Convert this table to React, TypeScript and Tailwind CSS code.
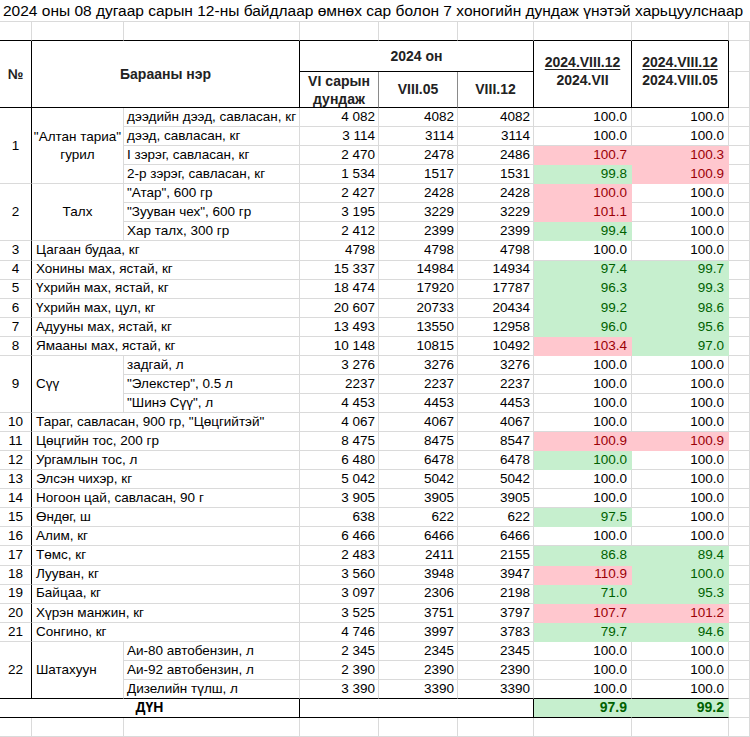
import React from "react";

type Tone = "r" | "g" | "";

type Item = {
  name: string;
  vi: string;
  a: string;
  b: string;
  c1: string;
  c2: string;
  t1?: Tone;
  t2?: Tone;
};

type Group = { no: number; group?: string; center?: boolean; items: Item[] };

const groups: Group[] = [
  {
    no: 1,
    group: "\"Алтан тариа\" гурил",
    center: true,
    items: [
      { name: "дээдийн дээд, савласан, кг", vi: "4 082", a: "4082", b: "4082", c1: "100.0", c2: "100.0" },
      { name: "дээд, савласан, кг", vi: "3 114", a: "3114", b: "3114", c1: "100.0", c2: "100.0" },
      { name: "I зэрэг, савласан, кг", vi: "2 470", a: "2478", b: "2486", c1: "100.7", c2: "100.3", t1: "r", t2: "r" },
      { name: "2-р зэрэг, савласан, кг", vi: "1 534", a: "1517", b: "1531", c1: "99.8", c2: "100.9", t1: "g", t2: "r" },
    ],
  },
  {
    no: 2,
    group: "Талх",
    center: true,
    items: [
      { name: "\"Атар\", 600 гр", vi: "2 427", a: "2428", b: "2428", c1: "100.0", c2: "100.0", t1: "r" },
      { name: "\"Зууван чех\", 600 гр", vi: "3 195", a: "3229", b: "3229", c1: "101.1", c2: "100.0", t1: "r" },
      { name: "Хар талх, 300 гр", vi: "2 412", a: "2399", b: "2399", c1: "99.4", c2: "100.0", t1: "g" },
    ],
  },
  { no: 3, items: [{ name: "Цагаан будаа, кг", vi: "4798", a: "4798", b: "4798", c1: "100.0", c2: "100.0" }] },
  { no: 4, items: [{ name: "Хонины мах, ястай, кг", vi: "15 337", a: "14984", b: "14934", c1: "97.4", c2: "99.7", t1: "g", t2: "g" }] },
  { no: 5, items: [{ name: "Үхрийн мах, ястай, кг", vi: "18 474", a: "17920", b: "17787", c1: "96.3", c2: "99.3", t1: "g", t2: "g" }] },
  { no: 6, items: [{ name: "Үхрийн мах, цул, кг", vi: "20 607", a: "20733", b: "20434", c1: "99.2", c2: "98.6", t1: "g", t2: "g" }] },
  { no: 7, items: [{ name: "Адууны мах, ястай, кг", vi: "13 493", a: "13550", b: "12958", c1: "96.0", c2: "95.6", t1: "g", t2: "g" }] },
  { no: 8, items: [{ name: "Ямааны мах, ястай, кг", vi: "10 148", a: "10815", b: "10492", c1: "103.4", c2: "97.0", t1: "r", t2: "g" }] },
  {
    no: 9,
    group: "Сүү",
    items: [
      { name: "задгай, л", vi: "3 276", a: "3276", b: "3276", c1: "100.0", c2: "100.0" },
      { name: "\"Элекстер\", 0.5 л", vi: "2237", a: "2237", b: "2237", c1: "100.0", c2: "100.0" },
      { name: "\"Шинэ Сүү\", л", vi: "4 453", a: "4453", b: "4453", c1: "100.0", c2: "100.0" },
    ],
  },
  { no: 10, items: [{ name: "Тараг, савласан, 900 гр, \"Цөцгийтэй\"", vi: "4 067", a: "4067", b: "4067", c1: "100.0", c2: "100.0" }] },
  { no: 11, items: [{ name: "Цөцгийн тос, 200 гр", vi: "8 475", a: "8475", b: "8547", c1: "100.9", c2: "100.9", t1: "r", t2: "r" }] },
  { no: 12, items: [{ name: "Ургамлын тос, л", vi: "6 480", a: "6478", b: "6478", c1: "100.0", c2: "100.0", t1: "g" }] },
  { no: 13, items: [{ name: "Элсэн чихэр, кг", vi: "5 042", a: "5042", b: "5042", c1: "100.0", c2: "100.0" }] },
  { no: 14, items: [{ name: "Ногоон цай, савласан, 90 г", vi: "3 905", a: "3905", b: "3905", c1: "100.0", c2: "100.0" }] },
  { no: 15, items: [{ name: "Өндөг, ш", vi: "638", a: "622", b: "622", c1: "97.5", c2: "100.0", t1: "g" }] },
  { no: 16, items: [{ name: "Алим, кг", vi: "6 466", a: "6466", b: "6466", c1: "100.0", c2: "100.0" }] },
  { no: 17, items: [{ name: "Төмс, кг", vi: "2 483", a: "2411", b: "2155", c1: "86.8", c2: "89.4", t1: "g", t2: "g" }] },
  { no: 18, items: [{ name: "Лууван, кг", vi: "3 560", a: "3948", b: "3947", c1: "110.9", c2: "100.0", t1: "r", t2: "g" }] },
  { no: 19, items: [{ name: "Байцаа, кг", vi: "3 097", a: "2306", b: "2198", c1: "71.0", c2: "95.3", t1: "g", t2: "g" }] },
  { no: 20, items: [{ name: "Хүрэн манжин, кг", vi: "3 525", a: "3751", b: "3797", c1: "107.7", c2: "101.2", t1: "r", t2: "r" }] },
  { no: 21, items: [{ name: "Сонгино, кг", vi: "4 746", a: "3997", b: "3783", c1: "79.7", c2: "94.6", t1: "g", t2: "g" }] },
  {
    no: 22,
    group: "Шатахуун",
    items: [
      { name: "Аи-80 автобензин, л", vi: "2 345", a: "2345", b: "2345", c1: "100.0", c2: "100.0" },
      { name: "Аи-92 автобензин, л", vi: "2 390", a: "2390", b: "2390", c1: "100.0", c2: "100.0" },
      { name: "Дизелийн түлш, л", vi: "3 390", a: "3390", b: "3390", c1: "100.0", c2: "100.0" },
    ],
  },
];

// gridline / border colours
const R = "border-r-[#dadada]";
const B = "border-b-[#dadada]";
const RK = "border-r-black";
const BK = "border-b-black";
const RM = "border-r-[#8a8a8a]";

function Cell({ className = "", children }: { className?: string; children?: React.ReactNode }) {
  return (
    <div className={`flex items-center overflow-hidden whitespace-nowrap border-r border-b ${className}`}>
      {children}
    </div>
  );
}

function toneCls(t: Tone | undefined, bottom: string): string {
  if (t === "r") return "bg-[#ffc7ce] text-[#9c0006] border-r-[#ffc7ce] border-b-[#ffc7ce]";
  if (t === "g") return "bg-[#c6efce] text-[#006100] border-r-[#c6efce] border-b-[#c6efce]";
  return `${R} ${bottom}`;
}

export default function App() {
  return (
    <div className="relative w-[750px] h-[737px] overflow-hidden bg-white text-[13.5px] text-black font-['Liberation_Sans',Arial,sans-serif]">
      <div className="grid grid-cols-[32px_92px_176px_79px_79px_76px_98px_97px_21px] grid-rows-[22px_19px_31px_36px_repeat(31,19.065px)_19px_19px]">
        {/* title */}
        <div className="col-span-9 flex items-center border-b border-b-[#dadada] pl-[3px] text-[15.5px] whitespace-nowrap">
          2024 оны 08 дугаар сарын 12-ны байдлаар өмнөх сар болон 7 хоногийн дундаж үнэтэй харьцуулснаар
        </div>

        {/* empty row above header */}
        {[0, 1, 2, 3, 4, 5, 6, 7].map((i) => (
          <Cell key={`e${i}`} className={`${R} ${BK}`} />
        ))}
        <Cell className={`${R} ${B}`} />

        {/* header */}
        <Cell className={`row-span-2 justify-center text-[14px] font-bold text-[#222] ${RK} ${BK}`}>№</Cell>
        <Cell className={`col-span-2 row-span-2 justify-center text-[14px] font-bold text-[#222] ${RK} ${BK}`}>Барааны нэр</Cell>
        <Cell className={`col-span-3 justify-center text-[14px] font-bold text-[#222] ${RK} ${BK}`}>2024 он</Cell>
        <div className={`row-span-2 flex flex-col items-center justify-center border-r border-b pb-[6px] text-[14px] font-bold leading-[18px] text-[#222] ${RK} ${BK}`}>
          <span className="underline underline-offset-2">2024.VIII.12</span>
          <span>2024.VII</span>
        </div>
        <div className={`row-span-2 flex flex-col items-center justify-center border-r border-b pb-[6px] text-[14px] font-bold leading-[18px] text-[#222] ${RK} ${BK}`}>
          <span className="underline underline-offset-2">2024.VIII.12</span>
          <span>2024.VIII.05</span>
        </div>
        <Cell className={`${R} ${B}`} />
        <div className={`flex flex-col items-center justify-center border-r border-b text-center text-[14px] font-bold leading-[18px] text-[#222] ${RM} ${BK}`}>
          <span>VI сарын</span>
          <span>дундаж</span>
        </div>
        <Cell className={`justify-center text-[14px] font-bold text-[#222] ${RM} ${BK}`}>VIII.05</Cell>
        <Cell className={`justify-center text-[14px] font-bold text-[#222] ${RK} ${BK}`}>VIII.12</Cell>
        <Cell className={`${R} ${B}`} />

        {/* body */}
        {groups.map((g, gi) => {
          const lastGroup = gi === groups.length - 1;
          const span = g.items.length === 4 ? "row-span-4" : g.items.length === 3 ? "row-span-3" : "";
          return g.items.map((it, ii) => {
            const bot = lastGroup && ii === g.items.length - 1 ? BK : B;
            const gb = lastGroup ? BK : B;
            return (
              <React.Fragment key={`${g.no}-${ii}`}>
                {ii === 0 && <Cell className={`${span} justify-center ${RK} ${gb}`}>{g.no}</Cell>}
                {ii === 0 && g.group && (
                  <div
                    className={`${span} flex items-center border-r border-b ${R} ${gb} ${
                      g.center ? "justify-center px-[1px] text-center leading-[18px]" : "pl-[4px]"
                    }`}
                  >
                    <span>{g.group}</span>
                  </div>
                )}
                <Cell className={`${g.group ? "pl-[3px]" : "col-span-2 pl-[4px]"} ${R} ${bot}`}>{it.name}</Cell>
                <Cell className={`justify-end pr-[3px] ${R} ${bot}`}>{it.vi}</Cell>
                <Cell className={`justify-end pr-[3px] ${R} ${bot}`}>{it.a}</Cell>
                <Cell className={`justify-end pr-[3px] ${R} ${bot}`}>{it.b}</Cell>
                <Cell className={`justify-end pr-[4px] ${toneCls(it.t1, bot)} ${bot === BK ? BK : ""}`}>{it.c1}</Cell>
                <Cell className={`justify-end pr-[4px] ${toneCls(it.t2, bot)} ${bot === BK ? BK : ""}`}>{it.c2}</Cell>
                <Cell className={`${R} ${B}`} />
              </React.Fragment>
            );
          });
        })}

        {/* total */}
        <Cell className={`col-span-3 justify-center text-[14px] font-bold ${RK} ${BK}`}>ДҮН</Cell>
        <Cell className={`col-span-3 ${RK} ${BK}`} />
        <Cell className={`justify-end pr-[4px] bg-[#c6efce] text-[14px] font-bold text-[#006100] border-r-[#c6efce] ${BK}`}>97.9</Cell>
        <Cell className={`justify-end pr-[4px] bg-[#c6efce] text-[14px] font-bold text-[#006100] border-r-[#c6efce] ${BK}`}>99.2</Cell>
        <Cell className={`${R} ${B}`} />

        {/* trailing empty row */}
        {[0, 1, 2, 3, 4, 5, 6, 7, 8].map((i) => (
          <Cell key={`z${i}`} className={`${R} ${B}`} />
        ))}
      </div>
    </div>
  );
}
